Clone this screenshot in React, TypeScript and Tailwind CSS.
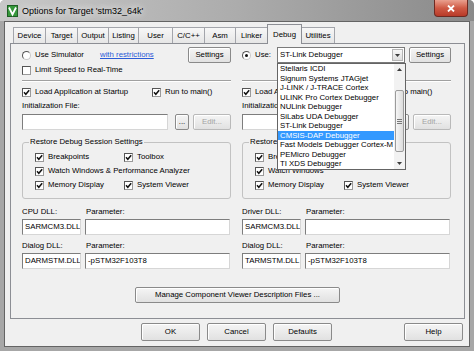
import React from "react";

type Kids = { children?: React.ReactNode };

function Check({ on = true }: { on?: boolean }) {
  return (
    <span className="flex h-[9px] w-[9px] shrink-0 items-center justify-center border border-[#9a9a9a] border-t-[#555] border-l-[#555] bg-white">
      {on && (
        <svg viewBox="0 0 7 7" className="h-[7px] w-[7px]">
          <path d="M1 3.3 L2.8 5.3 L6.2 1.2" fill="none" stroke="#111" strokeWidth="1.5" />
        </svg>
      )}
    </span>
  );
}

function Radio({ on = false }: { on?: boolean }) {
  return (
    <span className="flex h-[9px] w-[9px] shrink-0 items-center justify-center rounded-full border border-[#c8c8c8] border-t-[#555] border-l-[#555] bg-white">
      {on && <span className="h-[3px] w-[3px] rounded-full bg-[#111]" />}
    </span>
  );
}

function Btn({ children, cls = "", disabled = false }: Kids & { cls?: string; disabled?: boolean }) {
  return (
    <div
      className={`flex items-center justify-center whitespace-nowrap rounded-[2px] border bg-linear-to-b from-[#f5f5f5] to-[#e1e1e1] shadow-[inset_1px_1px_0_#ffffff] ${
        disabled ? "border-[#b9b9b9] text-[#a3a3a3]" : "border-[#8a8a8a]"
      } ${cls}`}
    >
      {children}
    </div>
  );
}

function Field({ children, cls = "" }: Kids & { cls?: string }) {
  return (
    <div
      className={`flex h-[16px] items-center overflow-hidden whitespace-nowrap border border-[#d6d6d6] border-t-[#7d7d7d] border-l-[#7d7d7d] bg-white pl-[2px] ${cls}`}
    >
      {children}
    </div>
  );
}

const tabs = [
  { name: "Device", w: "w-[33px]" },
  { name: "Target", w: "w-[33px]" },
  { name: "Output", w: "w-[32px]" },
  { name: "Listing", w: "w-[31px]" },
  { name: "User", w: "w-[35px]" },
  { name: "C/C++", w: "w-[33px]" },
  { name: "Asm", w: "w-[32px]" },
  { name: "Linker", w: "w-[33px]" },
  { name: "Debug", w: "w-[35px]" },
  { name: "Utilities", w: "w-[34px]" },
];

const debuggers = [
  "Stellaris ICDI",
  "Signum Systems JTAGjet",
  "J-LINK / J-TRACE Cortex",
  "ULINK Pro Cortex Debugger",
  "NULink Debugger",
  "SiLabs UDA Debugger",
  "ST-Link Debugger",
  "CMSIS-DAP Debugger",
  "Fast Models Debugger Cortex-M",
  "PEMicro Debugger",
  "TI XDS Debugger",
];

function Arrow({ up }: { up?: boolean }) {
  return (
    <svg viewBox="0 0 5 3" className="h-[3px] w-[5px]">
      <path d={up ? "M0 3 L2.5 0 L5 3 Z" : "M0 0 L5 0 L2.5 3 Z"} fill="#3c3c3c" />
    </svg>
  );
}

function DebuggerList() {
  return (
    <div className="absolute left-[-1px] top-[15px] z-10 flex w-[129px] border border-[#646464] bg-white">
      <div className="flex-1">
        {debuggers.map((d) => (
          <div
            key={d}
            className={`h-[9.5px] whitespace-nowrap pl-[2px] leading-[9.5px] ${
              d === "CMSIS-DAP Debugger" ? "bg-[#3399ff] text-white" : ""
            }`}
          >
            {d}
          </div>
        ))}
      </div>
      <div className="flex w-[11px] flex-col bg-[#f2f2f2]">
        <div className="flex h-[11px] items-center justify-center">
          <Arrow up />
        </div>
        <div className="flex-1">
          <div className="mx-[1px] mt-[15px] flex h-[62px] flex-col items-center justify-center gap-[1px] rounded-[2px] border border-[#9b9b9b] bg-linear-to-r from-[#f6f6f6] to-[#dcdcdc]">
            <span className="h-px w-[5px] bg-[#777]" />
            <span className="h-px w-[5px] bg-[#777]" />
            <span className="h-px w-[5px] bg-[#777]" />
          </div>
        </div>
        <div className="flex h-[11px] items-center justify-center">
          <Arrow />
        </div>
      </div>
    </div>
  );
}

function Column({ right = false }: { right?: boolean }) {
  return (
    <div className="flex w-[209px] flex-col">
      {right ? (
        <div className="mt-[3px] flex h-[16px] items-center">
          <Radio on />
          <span className="ml-[4px] w-[22px]">Use:</span>
          <div className="relative flex h-[16px] w-[128px] items-center border border-[#7a7a7a] bg-white">
            <span className="flex-1 pl-[2px]">ST-Link Debugger</span>
            <span className="mr-[1px] flex h-[12px] w-[11px] items-center justify-center border border-[#b5b5b5] bg-linear-to-b from-[#f7f7f7] to-[#dedede]">
              <Arrow />
            </span>
            <DebuggerList />
          </div>
          <Btn cls="ml-auto h-[16px] w-[42px]">Settings</Btn>
        </div>
      ) : (
        <div className="mt-[3px] flex h-[16px] items-center">
          <Radio />
          <span className="ml-[4px] w-[65px]">Use Simulator</span>
          <span className="text-[#2a5bd7] underline">with restrictions</span>
          <Btn cls="ml-auto h-[16px] w-[43px]">Settings</Btn>
        </div>
      )}

      <div className="mt-[2px] flex h-[10px] items-center">
        {!right && (
          <>
            <Check on={false} />
            <span className="ml-[4px]">Limit Speed to Real-Time</span>
          </>
        )}
      </div>

      <div className="mt-[5px] h-[2px] border-t border-b border-t-[#a0a0a0] border-b-white" />

      <div className="mt-[5px] flex h-[10px] items-center">
        <Check />
        <span className="ml-[4px] w-[117px]">Load Application at Startup</span>
        <Check />
        <span className="ml-[4px]">Run to main()</span>
      </div>

      <div className="mt-[4px] flex h-[10px] items-center">Initialization File:</div>

      <div className="mt-[3px] flex h-[16px] items-center">
        <Field cls="w-[146px]" />
        <Btn cls="ml-[7px] h-[16px] w-[14px]">...</Btn>
        <Btn cls="ml-[4px] h-[16px] w-[38px]" disabled>
          Edit...
        </Btn>
      </div>

      <fieldset className="mt-[7px] rounded-[3px] border border-[#c2c2c2] p-0">
        <legend className="ml-[6px] px-[1px] leading-[10px]">Restore Debug Session Settings</legend>
        <div className="pb-[6px] pl-[12px] pt-[3px]">
          <div className="flex h-[14px] items-center">
            <Check />
            <span className="ml-[4px] w-[76px]">Breakpoints</span>
            <Check />
            <span className="ml-[4px]">Toolbox</span>
          </div>
          <div className="flex h-[14px] items-center">
            <Check />
            <span className="ml-[4px]">{right ? "Watch Windows" : "Watch Windows & Performance Analyzer"}</span>
          </div>
          <div className="flex h-[14px] items-center">
            <Check />
            <span className="ml-[4px] w-[76px]">Memory Display</span>
            <Check />
            <span className="ml-[4px]">System Viewer</span>
          </div>
        </div>
      </fieldset>

      <div className="mt-[8px] flex h-[10px] items-center">
        <span className="w-[64px]">{right ? "Driver DLL:" : "CPU DLL:"}</span>
        <span>Parameter:</span>
      </div>
      <div className="mt-[2px] flex h-[16px] items-center">
        <Field cls="w-[59px]">SARMCM3.DLL</Field>
        <Field cls="ml-[4px] w-[145px]" />
      </div>

      <div className="mt-[6px] flex h-[10px] items-center">
        <span className="w-[64px]">Dialog DLL:</span>
        <span>Parameter:</span>
      </div>
      <div className="mt-[2px] flex h-[16px] items-center">
        <Field cls="w-[59px]">{right ? "TARMSTM.DLL" : "DARMSTM.DLL"}</Field>
        <Field cls="ml-[4px] w-[145px]">-pSTM32F103T8</Field>
      </div>
    </div>
  );
}

export default function App() {
  return (
    <div className="h-[351px] w-[474px] bg-white font-['Liberation_Sans',Arial,sans-serif] text-[7.8px] leading-[10px] text-black">
      <div className="flex h-full w-full flex-col rounded-t-[5px] bg-[#a7a7a7]">
        {/* title bar */}
        <div className="flex h-[21px] shrink-0 items-center rounded-t-[5px] bg-linear-to-r from-[#c8c8c8] via-[#acacac] to-[#8a8a8a]">
          <svg viewBox="0 0 11 12" className="ml-[7px] h-[12px] w-[11px]">
            <rect x="0.5" y="0.5" width="10" height="11" fill="#35973a" stroke="#1d5e22" />
            <path d="M2 2.5 L5.5 9.5 L9 2.5" fill="none" stroke="#ffffff" strokeWidth="1.8" />
          </svg>
          <span className="ml-[4px] text-[9px] [text-shadow:0_0_6px_#f2f2f2,0_0_10px_#e6e6e6]">
            Options for Target 'stm32_64k'
          </span>
          <div className="ml-auto mr-[6px] flex h-[17px] w-[34px] items-center justify-center self-start rounded-b-[4px] border border-t-0 border-[#6e2a22] bg-linear-to-b from-[#e9a08f] via-[#cf5a45] to-[#b83a28]">
            <svg viewBox="0 0 8 7" className="h-[7px] w-[8px]">
              <path d="M1 0.5 L7 6.5 M7 0.5 L1 6.5" stroke="#ffffff" strokeWidth="1.8" />
            </svg>
          </div>
        </div>

        {/* client */}
        <div className="mx-[4px] mb-[4px] flex flex-1 flex-col border border-[#646464] bg-[#f0f0f0]">
          <div className="flex h-[21px] items-end pl-[8px]">
            {tabs.map((t, i) =>
              t.name === "Debug" ? (
                <div
                  key={t.name}
                  className={`relative z-10 -mb-px -ml-px flex h-[20px] items-center justify-center border border-b-0 border-[#8c8e94] bg-[#f0f0f0] ${t.w}`}
                >
                  {t.name}
                </div>
              ) : (
                <div
                  key={t.name}
                  className={`flex h-[16px] items-center justify-center border border-b-0 border-[#a3a5ab] bg-linear-to-b from-[#f7f7f7] to-[#e6e6e6] ${
                    i === 0 ? "" : "-ml-px"
                  } ${t.w}`}
                >
                  {t.name}
                </div>
              )
            )}
          </div>

          <div className="ml-[5px] flex h-[276px] w-[455px] flex-col border border-[#8c8e94] bg-[#f0f0f0]">
            <div className="flex gap-[11px] pl-[11px]">
              <Column />
              <Column right />
            </div>
            <Btn cls="mx-auto mt-[18px] h-[16px] w-[205px]">Manage Component Viewer Description Files ...</Btn>
          </div>

          <div className="mt-[4px] flex pl-[136px] pr-[6px]">
            <Btn cls="h-[18px] w-[59px]">OK</Btn>
            <Btn cls="ml-[7px] h-[18px] w-[59px]">Cancel</Btn>
            <Btn cls="ml-[7px] h-[18px] w-[59px]">Defaults</Btn>
            <Btn cls="ml-auto h-[18px] w-[59px]">Help</Btn>
          </div>
        </div>
      </div>
    </div>
  );
}
